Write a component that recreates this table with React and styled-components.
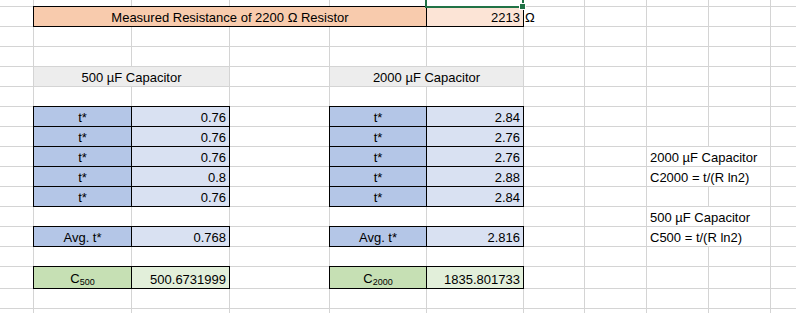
import React from "react";
import styled, { createGlobalStyle } from "styled-components";

const Global = createGlobalStyle`
  html, body { margin: 0; padding: 0; background: #fff; overflow: hidden; }
  body { font-family: "Liberation Sans", Arial, sans-serif; }
`;

const Sheet = styled.div`
  display: grid;
  grid-template-columns: 33px 97px 97px 99px 96px 96px 60px 61px 61px 61px 1fr;
  grid-template-rows: 6px repeat(13, 19px) 21px 19px 19px;
  gap: 1px;
  background: #d4d4d4;
  width: 796px;
  height: 313px;
  overflow: hidden;
  font-size: 13px;
  color: #000;
`;

const Cell = styled.div`
  grid-column: span ${(p) => p.$span || 1};
  background: ${(p) => p.$bg || "#fff"};
  display: flex;
  align-items: flex-end;
  justify-content: ${(p) =>
    p.$align === "center" ? "center" : p.$align === "right" ? "flex-end" : "flex-start"};
  padding: 0 ${(p) => (p.$tight ? "1px" : "3px")} 1px;
  line-height: 15px;
  white-space: nowrap;
  position: relative;
  outline: ${(p) => (p.$bordered ? "1px solid #000" : "none")};
`;

const Text = styled.span`
  display: inline-block;
`;

const Sub = styled.span`
  font-size: 9px;
  vertical-align: -2px;
  line-height: 9px;
`;

const Selection = styled.div`
  position: absolute;
  left: -2px;
  right: -1px;
  top: -10px;
  bottom: -2px;
  border: 2px solid #217346;
  z-index: 2;
`;

const Handle = styled.div`
  position: absolute;
  right: -4px;
  bottom: -4px;
  width: 5px;
  height: 5px;
  background: #217346;
  border: 1px solid #fff;
`;

const C = {
  orange: "#f8cbad",
  peach: "#fce4d6",
  gray: "#ededed",
  blue: "#b4c6e7",
  lightBlue: "#d9e1f2",
  green: "#c6e0b4",
  lightGreen: "#e2efda",
};

const NCOLS = 11;

const tValues500 = ["0.76", "0.76", "0.76", "0.8", "0.76"];
const tValues2000 = ["2.84", "2.76", "2.76", "2.88", "2.84"];
const sideNotes = {
  8: "2000 µF Capacitor",
  9: "C2000 = t/(R ln2)",
  11: "500 µF Capacitor",
  12: "C500 = t/(R ln2)",
};

function pairCells(col, label, value, bg, bgLight) {
  return [
    { c: col, text: label, bg, align: "center", bordered: true },
    { c: col + 1, text: value, bg: bgLight, align: "right", bordered: true },
  ];
}

function rowSpecs(r) {
  const specs = [];
  if (r === 0) specs.push({ c: 5, selected: true });
  if (r === 1) {
    specs.push({
      c: 1,
      span: 4,
      text: "Measured Resistance of 2200 Ω Resistor",
      bg: C.orange,
      align: "center",
      bordered: true,
    });
    specs.push({ c: 5, text: "2213", bg: C.peach, align: "right", bordered: true });
    specs.push({ c: 6, text: "Ω", tight: true });
  }
  if (r === 4) {
    specs.push({ c: 1, span: 2, text: "500 µF Capacitor", bg: C.gray, align: "center" });
    specs.push({ c: 4, span: 2, text: "2000 µF Capacitor", bg: C.gray, align: "center" });
  }
  if (r >= 6 && r <= 10) {
    specs.push(...pairCells(1, "t*", tValues500[r - 6], C.blue, C.lightBlue));
    specs.push(...pairCells(4, "t*", tValues2000[r - 6], C.blue, C.lightBlue));
  }
  if (r === 12) {
    specs.push(...pairCells(1, "Avg. t*", "0.768", C.blue, C.lightBlue));
    specs.push(...pairCells(4, "Avg. t*", "2.816", C.blue, C.lightBlue));
  }
  if (r === 14) {
    specs.push(
      ...pairCells(1, <>C<Sub>500</Sub></>, "500.6731999", C.green, C.lightGreen)
    );
    specs.push(
      ...pairCells(4, <>C<Sub>2000</Sub></>, "1835.801733", C.green, C.lightGreen)
    );
  }
  if (sideNotes[r]) specs.push({ c: 8, span: 2, text: sideNotes[r] });

  const out = [];
  let c = 0;
  while (c < NCOLS) {
    const s = specs.find((x) => x.c === c);
    if (s) {
      out.push(s);
      c += s.span || 1;
    } else {
      out.push({ c });
      c += 1;
    }
  }
  return out;
}

const ROWS = 17;

export default function App() {
  return (
    <>
      <Global />
      <Sheet>
        {Array.from({ length: ROWS }, (_, r) =>
          rowSpecs(r).map((s) => (
            <Cell
              key={`${r}-${s.c}`}
              $span={s.span}
              $bg={s.bg}
              $align={s.align}
              $bordered={s.bordered}
              $tight={s.tight}
            >
              {s.text && <Text>{s.text}</Text>}
              {s.selected && (
                <Selection>
                  <Handle />
                </Selection>
              )}
            </Cell>
          ))
        )}
      </Sheet>
    </>
  );
}
